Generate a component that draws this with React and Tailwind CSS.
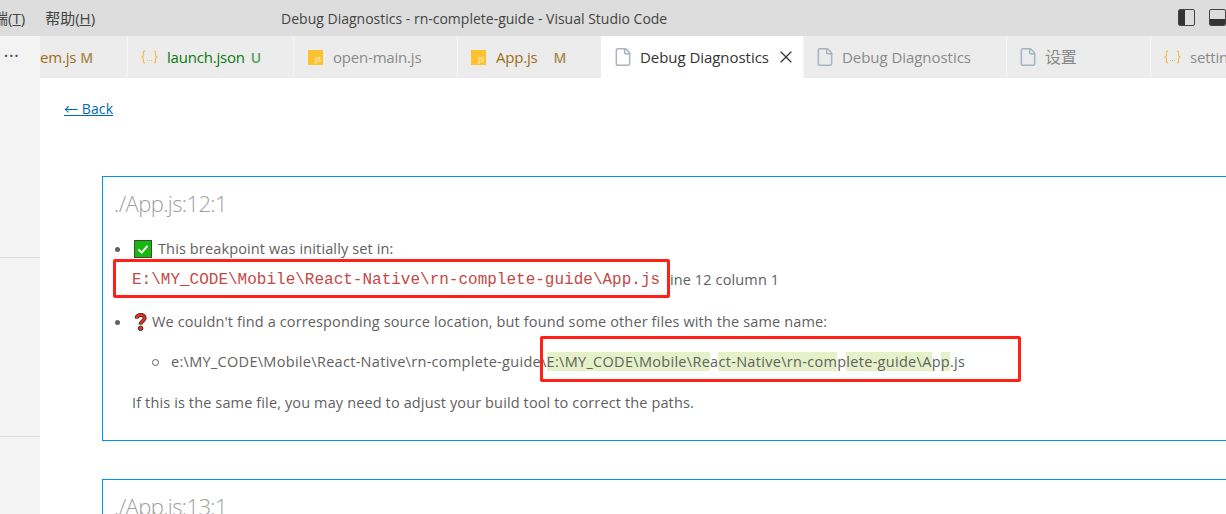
import React from 'react';
import { File, X } from 'lucide-react';

const font = "font-['Open_Sans','Noto_Sans_CJK_SC',sans-serif]";

const JsIcon = () => (
  <span className="flex h-[15px] w-[15px] shrink-0 items-end justify-end bg-[#fcc22f] pr-[2px] pb-[1px] text-[7px] leading-[8px] text-white">JS</span>
);

const JsonIcon = () => (
  <svg width="17" height="14" viewBox="0 0 17 14" fill="none" stroke="#f5bd44" strokeWidth="1.2" className="shrink-0">
    <path d="M4 1 C2 1 2.5 2.5 2.5 4.5 C2.5 6 2 6.6 1 7 C2 7.4 2.5 8 2.5 9.5 C2.5 11.5 2 13 4 13" />
    <path d="M13 1 C15 1 14.5 2.5 14.5 4.5 C14.5 6 15 6.6 16 7 C15 7.4 14.5 8 14.5 9.5 C14.5 11.5 15 13 13 13" />
    <path d="M6 10.5 h1 M8 10.5 h1 M10 10.5 h1" strokeWidth="0.9" />
  </svg>
);

const DocIcon = () => <File size={20} strokeWidth={1.8} className="shrink-0 text-[#a5b4be]" />;

const Tab = ({ icon, label, badge, width, labelClass = 'text-[#8a8a8a]', badgeClass = 'text-[#a98a52]', track = 'tracking-[-0.2px]', pad = 'pl-[13px]', gap = 'gap-[10px]', active, close }) => (
  <div className={`flex h-full shrink-0 items-center ${gap} ${pad} ${width} ${active ? 'bg-white' : 'border-l border-[#f5f5f5] bg-[#ececec]'}`}>
    {icon}
    <span className={`whitespace-nowrap ${track} ${labelClass}`}>{label}</span>
    {badge && <span className={`text-[14px] font-semibold ${badgeClass}`}>{badge}</span>}
    {close && <X size={20} strokeWidth={1.4} className="text-[#333]" />}
  </div>
);

const CheckEmoji = () => (
  <svg width="18" height="18" viewBox="0 0 18 18" className="shrink-0">
    <rect x="0.5" y="0.5" width="17" height="17" fill="#17b90f" stroke="#3c4a3a" />
    <path d="M4.5 9.5 L7.7 12.6 L13.5 5.8" fill="none" stroke="#fff" strokeWidth="2" />
  </svg>
);

const QuestionEmoji = () => (
  <svg width="13" height="18" viewBox="0 0 13 18" className="shrink-0">
    <path d="M2.6 5.6 C2.6 0.8 10.6 0.8 10.6 5.2 C10.6 8 6.6 8 6.6 11.4" fill="none" stroke="#3a2a28" strokeWidth="4" />
    <path d="M2.6 5.6 C2.6 0.8 10.6 0.8 10.6 5.2 C10.6 8 6.6 8 6.6 11.4" fill="none" stroke="#e8321f" strokeWidth="2.2" />
    <circle cx="6.6" cy="15.3" r="2.3" fill="#e8321f" stroke="#3a2a28" />
  </svg>
);

const Hl = ({ children }) => <span className="bg-[#e5f1c8]">{children}</span>;

const Bullet = () => <span className="h-[5px] w-[5px] shrink-0 rounded-full bg-[#616161]" />;

export default function App() {
  return (
    <div className={`h-[514px] w-[1226px] overflow-hidden bg-white text-[14px] text-[#616161] ${font}`}>
      <div className="relative flex h-[36px] items-center bg-[#dddddd] text-[#444]">
        <span className="ml-[-7px] whitespace-nowrap text-[15px]">端(<u>T</u>)</span>
        <span className="ml-[20px] whitespace-nowrap text-[15px]">帮助(<u>H</u>)</span>
        <span className="ml-[186px] whitespace-nowrap text-[14px]">Debug Diagnostics - rn-complete-guide - Visual Studio Code</span>
        <div className="absolute right-0 top-[9px] flex gap-[14px]">
          <span className="flex h-[17px] w-[17px] overflow-hidden rounded-[2px] border border-[#444]">
            <span className="w-[6px] bg-[#333]" />
          </span>
          <span className="flex h-[17px] w-[17px] flex-col justify-end overflow-hidden rounded-[2px] border border-[#444]">
            <span className="h-[6px] bg-[#333]" />
          </span>
        </div>
      </div>

      <div className="flex h-[478px]">
        <div className="flex w-[40px] shrink-0 flex-col bg-[#f3f3f3]">
          <div className="flex h-[42px] items-center pl-[4px] pb-[3px] text-[#555]">
            <span className="text-[14px] leading-none font-bold tracking-[1.3px]">···</span>
          </div>
          <div className="mt-[179px] h-px bg-[#dedede]" />
          <div className="mt-[178px] h-px bg-[#dedede]" />
        </div>

        <div className="min-w-0 flex-1">
          <div className="flex h-[42px] overflow-hidden bg-[#ececec] text-[15px]">
            <div className="flex h-full w-[87px] shrink-0 items-center gap-[4px] bg-[#ececec]">
              <span className="tracking-[-0.2px] text-[#9c6c16]">em.js</span>
              <span className="text-[14px] font-semibold text-[#a98a52]">M</span>
            </div>
            <Tab icon={<JsonIcon />} label="launch.json" badge="U" width="w-[166px]" labelClass="text-[#0b7a0b]" badgeClass="ml-[-3px] text-[#589e58]" gap="gap-[9px]" />
            <Tab icon={<JsIcon />} label="open-main.js" width="w-[164px]" pad="pl-[14px]" />
            <Tab icon={<JsIcon />} label="App.js" badge="M" width="w-[144px]" labelClass="text-[#9c6c16]" badgeClass="ml-[6px] text-[#a98a52]" />
            <Tab icon={<DocIcon />} label="Debug Diagnostics" width="w-[202px]" labelClass="text-[#333]" track="tracking-[-0.05px]" pad="pl-[12px]" gap="gap-[7px]" active close />
            <Tab icon={<DocIcon />} label="Debug Diagnostics" width="w-[203px]" track="tracking-[-0.05px]" pad="pl-[11px]" gap="gap-[7px]" />
            <Tab icon={<DocIcon />} label="设置" width="w-[144px]" labelClass="text-[16px] text-[#8a8a8a]" pad="pl-[11px]" gap="gap-[7px]" />
            <Tab icon={<JsonIcon />} label="settings.json" width="w-[140px]" gap="gap-[9px]" />
          </div>

          <div className="px-[24px] pt-[21px]">
            <a href="#back" className="block w-fit text-[14px] leading-[19px] tracking-[0.1px] text-[#006ab1] underline">← Back</a>

            <div className="mt-[58px] ml-[38px] h-[265px] w-[1200px] border border-[#0090f1] px-[11px] pt-[12px] text-[14.5px] tracking-[0.13px]">
              <h3 className="text-[22px] leading-[28px] font-light tracking-[-0.6px] text-[#a0a0a0]">./App.js:12:1</h3>

              <div className="mt-[22px] flex items-center gap-[14px] pl-[1px] leading-[20px]">
                <Bullet />
                <span className="flex items-center gap-[6px]"><CheckEmoji />This breakpoint was initially set in:</span>
              </div>
              <div className="relative mt-[1px] flex h-[40px] items-center pl-[18px]">
                <code className="font-['Liberation_Mono',monospace] text-[16px] tracking-normal text-[#c44848]">E:\MY_CODE\Mobile\React-Native\rn-complete-guide\App.js</code>
                <span className="ml-[6px]">line 12 column 1</span>
                <div className="absolute left-[-1px] top-[-1px] h-[39px] w-[557px] rounded-[2px] border-[3px] border-[#ff2016]" />
              </div>

              <div className="mt-[12px] flex items-center gap-[14px] pl-[1px] leading-[20px]">
                <Bullet />
                <span className="flex items-center gap-[5px]"><QuestionEmoji />We couldn't find a corresponding source location, but found some other files with the same name:</span>
              </div>

              <div className="relative mt-[20px] flex items-center gap-[12px] pl-[38px] leading-[20px]">
                <span className="h-[7px] w-[7px] shrink-0 rounded-full border border-[#616161]" />
                <span className="whitespace-nowrap tracking-[0.3px]">
                  e:\MY_CODE\Mobile\React-Native\rn-complete-guide\
                  <Hl>E:\MY_CODE\Mobile\Re</Hl>a<Hl>ct-Native\rn-com</Hl>p<Hl>lete-guide\A</Hl>p<Hl>p</Hl>.js
                </span>
                <div className="absolute left-[426px] top-[-16px] h-[46px] w-[481px] rounded-[2px] border-[3px] border-[#ff2016]" />
              </div>

              <p className="mt-[21px] pl-[18px] leading-[20px]">If this is the same file, you may need to adjust your build tool to correct the paths.</p>
            </div>

            <div className="mt-[38px] ml-[38px] h-[100px] w-[1200px] border border-[#0090f1] px-[11px] pt-[12px]">
              <h3 className="text-[22px] leading-[28px] font-light tracking-[-0.6px] text-[#a0a0a0]">./App.js:13:1</h3>
            </div>
          </div>
        </div>
      </div>
    </div>
  );
}
